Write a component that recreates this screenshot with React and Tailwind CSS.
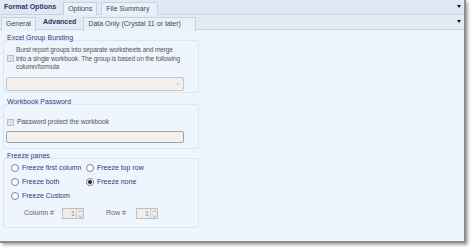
import React from "react";

const font = { fontFamily: '"Liberation Sans", Arial, sans-serif' };

const Tab = ({ label, active, extra = "" }) => (
  <div
    className={
      active
        ? "h-full flex items-center px-[3px] font-bold text-[#1f3a63]"
        : "h-full flex items-center px-[4px] mt-[2px] border border-b-0 border-[#c5d2e2] bg-[#e9f0f8] text-[#3a4a5e] " + extra
    }
  >
    {label}
  </div>
);

const Radio = ({ label, checked }) => (
  <div className="flex items-center gap-[3px] text-[#35357f] h-[14px]">
    <span className="w-[8px] h-[8px] rounded-full border border-[#7a8594] bg-white flex items-center justify-center">
      {checked && <span className="w-[4px] h-[4px] rounded-full bg-[#222]" />}
    </span>
    <span>{label}</span>
  </div>
);

const Spinner = () => (
  <div className="flex items-center w-[22px] h-[11px] border border-[#b9bfc7] bg-[#f1eeea]">
    <span className="flex-1 text-right pr-[1px] text-[#888] leading-none">1</span>
    <div className="w-[7px] h-full flex flex-col border-l border-[#c8ccd2]">
      <svg viewBox="0 0 7 5" className="w-[7px] h-[5px]"><path d="M1.5 3.5 L3.5 1.5 L5.5 3.5" stroke="#888" fill="none" strokeWidth="0.8" /></svg>
      <svg viewBox="0 0 7 5" className="w-[7px] h-[5px]"><path d="M1.5 1.5 L3.5 3.5 L5.5 1.5" stroke="#888" fill="none" strokeWidth="0.8" /></svg>
    </div>
  </div>
);

const Group = ({ title, children, className }) => (
  <div className={"relative mx-[3px] " + className}>
    <div className="absolute left-[3px] -top-[6px] px-[1px] text-[#35357f] leading-none">{title}</div>
    <div className="border border-[#dde6f0] rounded-[2px] h-full">{children}</div>
  </div>
);

export default function App() {
  return (
    <div className="w-[474px] h-[250px] bg-white text-[7px]" style={font}>
      <div className="w-[466px] h-[243px] border-r-2 border-b-2 border-[#8d8d8d] shadow-[2px_2px_3px_rgba(0,0,0,0.35)] bg-[#eef5fd] flex flex-col">
        <div className="h-[15px] flex items-stretch bg-[#dfe8f3] border-b border-[#c8d4e2] relative">
          <div className="flex items-stretch gap-[4px] pl-[1px]">
            <Tab label="Format Options" active />
            <Tab label="Options" />
            <Tab label="File Summary" extra="pr-[8px]" />
          </div>
          <span className="absolute right-[3px] top-[5px] w-0 h-0 border-l-[2.5px] border-r-[2.5px] border-t-[3px] border-l-transparent border-r-transparent border-t-[#111]" />
        </div>
        <div className="h-[15px] flex items-stretch bg-[#e3ebf5] border-b border-[#c8d4e2] relative">
          <div className="flex items-stretch gap-[4px] pl-[1px]">
            <Tab label="General" />
            <Tab label="Advanced" active />
            <Tab label="Data Only (Crystal 11 or later)" extra="pr-[14px]" />
          </div>
          <span className="absolute right-[3px] top-[5px] w-0 h-0 border-l-[2.5px] border-r-[2.5px] border-t-[3px] border-l-transparent border-r-transparent border-t-[#111]" />
        </div>

        <div className="flex flex-col w-[202px] pt-[10px]">
          <Group title="Excel Group Bursting" className="h-[53px]">
            <div className="flex items-center gap-[2px] pl-[3px] pt-[5px]">
              <span className="w-[7px] h-[7px] border border-[#b8c0ca] bg-[#dfe3e8] shrink-0" />
              <span className="text-[#555] leading-[8.5px] text-[6.6px] tracking-[-0.15px] whitespace-nowrap">
                Burst report groups into separate worksheets and merge<br />
                into a single workbook. The group is based on the following<br />
                column/formula
              </span>
            </div>
            <div className="mx-[2px] mt-[5px] w-[178px] h-[14px] border border-[#c2c7ce] rounded-[2px] bg-[#f2efec] flex items-center justify-end pr-[3px]">
              <svg viewBox="0 0 6 4" className="w-[5px] h-[4px]"><path d="M0.5 0.8 L3 3.2 L5.5 0.8" stroke="#9aa" fill="none" strokeWidth="0.8" /></svg>
            </div>
          </Group>

          <Group title="Workbook Password" className="h-[45px] mt-[11px]">
            <div className="flex items-center gap-[3px] pl-[3px] pt-[12px]">
              <span className="w-[7px] h-[7px] border border-[#b8c0ca] bg-[#dfe3e8]" />
              <span className="text-[#555] text-[6.8px] tracking-[-0.1px]">Password protect the workbook</span>
            </div>
            <div className="mx-[2px] mt-[4px] w-[178px] h-[12px] border border-[#9ea4ac] rounded-[2px] bg-[#f2efec]" />
          </Group>

          <Group title="Freeze panes" className="h-[70px] mt-[9px]">
            <div className="pl-[7px] pt-[2px] grid grid-cols-[75px_1fr]">
              <Radio label="Freeze first column" />
              <Radio label="Freeze top row" />
              <Radio label="Freeze both" />
              <Radio label="Freeze none" checked />
              <Radio label="Freeze Custom" />
            </div>
            <div className="flex items-center pl-[20px] pt-[5px] text-[#666]">
              <span className="w-[38px]">Column #</span>
              <Spinner />
              <span className="ml-[22px] w-[30px]">Row #</span>
              <Spinner />
            </div>
          </Group>
        </div>
      </div>
    </div>
  );
}
